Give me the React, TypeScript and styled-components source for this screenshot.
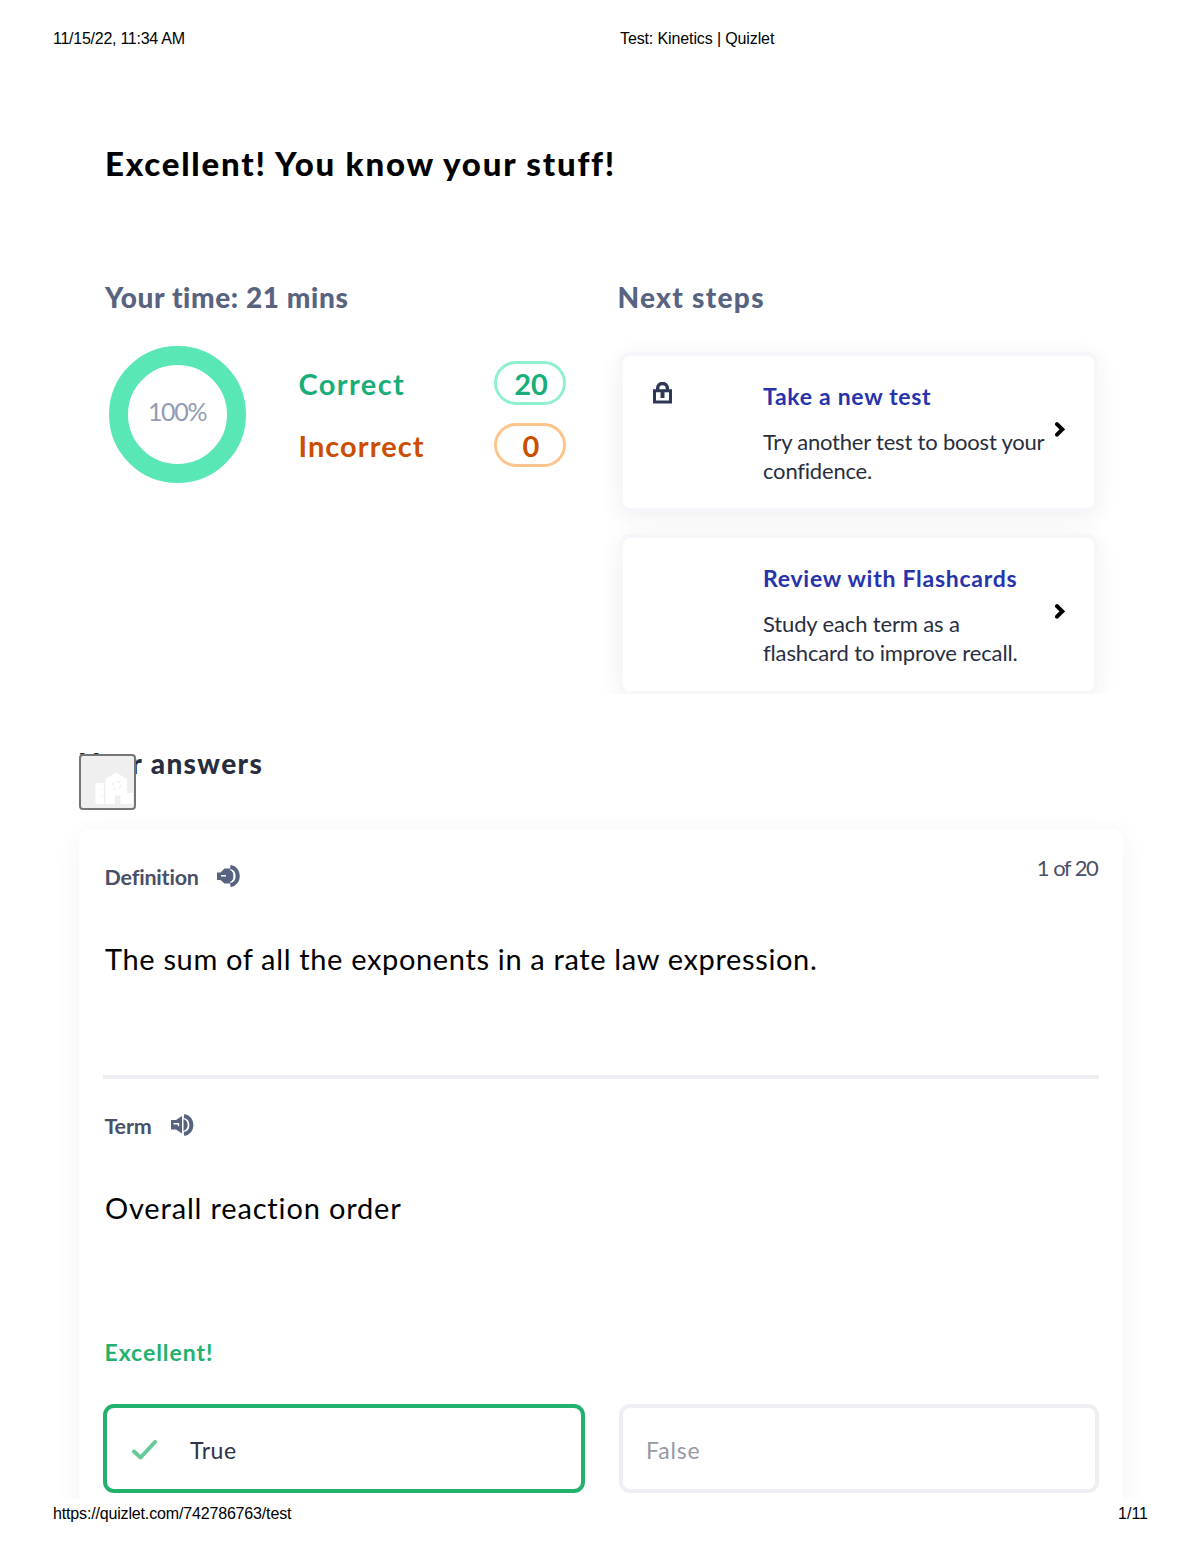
import React from 'react';
import styled, { createGlobalStyle } from 'styled-components';

const GlobalStyle = createGlobalStyle`
  *, *::before, *::after { box-sizing: border-box; }
  body {
    margin: 0;
    background: #fff;
    color: #000;
    font-family: Lato, 'Open Sans', sans-serif;
  }
  h1, h2, h3, p { margin: 0; }
`;

const Page = styled.div`
  width: 1200px;
  height: 1553px;
  display: flex;
  flex-direction: column;
  overflow: hidden;
`;

const PrintLine = styled.div`
  display: grid;
  grid-template-columns: 567px 1fr;
  padding: 0 52px 0 53px;
  font: 16px/18px 'Liberation Sans', Arial, sans-serif;
  white-space: nowrap;
`;

const PrintHeader = styled(PrintLine)`
  padding-top: 30px;
`;

const PrintFooter = styled(PrintLine)`
  padding-top: 6px;
`;

const PrintText = styled.span<{ $spacing?: number; $end?: boolean }>`
  letter-spacing: ${(p) => p.$spacing ?? 0}px;
  text-align: ${(p) => (p.$end ? 'right' : 'left')};
`;

const Title = styled.h1`
  margin-top: 95px;
  padding-left: 105px;
  font-size: 33px;
  font-weight: 900;
  line-height: 40px;
  letter-spacing: 1.78px;
`;

const Summary = styled.section`
  display: grid;
  grid-template-columns: 462px 479px;
  column-gap: 52px;
  height: 414px;
  margin-top: 97px;
  padding-left: 105px;
`;

const SectionHeading = styled.h2<{ $spacing: number }>`
  color: #586380;
  font-size: 28px;
  font-weight: 900;
  line-height: 34px;
  letter-spacing: ${(p) => p.$spacing}px;
  white-space: nowrap;
`;

const NextHeading = styled(SectionHeading)`
  margin-left: -1.5px;
`;

const Score = styled.div`
  display: flex;
  margin-top: 31.5px;
  padding-left: 4px;
`;

const Ring = styled.div`
  display: grid;
  place-items: center;
  width: 137px;
  height: 137px;
  border: 19.4px solid #59e8b5;
  border-radius: 50%;
`;

const Percent = styled.span`
  margin: -7px 0 0 -1px;
  color: #939bb4;
  font-size: 25px;
  line-height: 30px;
  letter-spacing: -1.33px;
`;

const Tally = styled.div`
  flex: 1;
  display: flex;
  flex-direction: column;
  gap: 18px;
  margin: 15.4px 1px 0 52.5px;
`;

const TallyRow = styled.div<{ $color: string }>`
  display: flex;
  align-items: center;
  justify-content: space-between;
  height: 44px;
  color: ${(p) => p.$color};
  font-size: 29px;
  font-weight: 700;
  line-height: 44px;
`;

const TallyLabel = styled.span<{ $spacing: number }>`
  padding-top: 2px;
  letter-spacing: ${(p) => p.$spacing}px;
`;

const Pill = styled.span<{ $border: string }>`
  display: flex;
  align-items: center;
  justify-content: center;
  width: 72px;
  height: 44px;
  padding: 2px 0 0 2px;
  border: 3px solid ${(p) => p.$border};
  border-radius: 22px;
`;

const StepList = styled.div`
  display: flex;
  flex-direction: column;
  gap: 22px;
  height: 380px;
  margin: 0 -30px;
  padding: 37.5px 30px 0;
  overflow: hidden;
`;

const StepCard = styled.article`
  flex: none;
  display: grid;
  grid-template-columns: 110px 292px 1fr;
  height: 160.5px;
  padding: 26px 29px 0 30px;
  border: 4px solid #f6f7fb;
  border-radius: 11px;
  background: #fff;
  box-shadow: 0 5px 22px rgba(40, 46, 62, 0.07);
`;

const StepTitle = styled.h3<{ $spacing: number }>`
  color: #2733ac;
  font-size: 23px;
  font-weight: 700;
  line-height: 28px;
  letter-spacing: ${(p) => p.$spacing}px;
  white-space: nowrap;
`;

const StepText = styled.p<{ $spacing: number }>`
  margin-top: 17px;
  color: #282e3e;
  font-size: 22px;
  line-height: 29px;
  letter-spacing: ${(p) => p.$spacing}px;
  white-space: nowrap;
`;

const StepIcon = styled.div`
  height: 24px;
`;

const StepArrow = styled.div`
  display: flex;
  justify-content: flex-end;
  padding-top: 40px;
`;

const AnswersHeading = styled.h2`
  position: relative;
  height: 34px;
  margin-top: 52px;
  padding-left: 80px;
  color: #282e3e;
  font-size: 28px;
  font-weight: 900;
  line-height: 34px;
  letter-spacing: 1.36px;
`;

const SchoolButton = styled.button`
  position: absolute;
  left: 79px;
  top: 8px;
  width: 57px;
  height: 56px;
  padding: 0;
  border: 2.5px solid #757575;
  border-radius: 4px;
  background: #efefef;
  overflow: hidden;
`;

const AnswerViewport = styled.div`
  display: flex;
  height: 719px;
  padding: 48.5px 77px 0 79px;
  overflow: hidden;
`;

const AnswerCard = styled.section`
  width: 1044px;
  height: 760px;
  padding: 27px 24px 0;
  border-radius: 11px;
  background: #fff;
  box-shadow: 0 5px 26px rgba(40, 46, 62, 0.06);
`;

const SideHeader = styled.div`
  display: flex;
  height: 40px;
  padding-left: 1.5px;
`;

const SideLabel = styled.span`
  padding-top: 8.5px;
  color: #4a5068;
  font-size: 21.5px;
  font-weight: 700;
  line-height: 26px;
  letter-spacing: -0.2px;
`;

const AudioButton = styled.span`
  margin: 9.5px 0 0 18px;
`;

const Counter = styled.span`
  margin: -1px 0 0 auto;
  padding-right: 2px;
  color: #4a5068;
  font-size: 22px;
  line-height: 26px;
  letter-spacing: -1.7px;
  word-spacing: 1.5px;
`;

const SideText = styled.p<{ $spacing: number }>`
  margin-top: 45.5px;
  padding-left: 2px;
  font-size: 29px;
  line-height: 36px;
  letter-spacing: ${(p) => p.$spacing}px;
`;

const Divider = styled.hr`
  height: 4px;
  margin: 97.5px 0 26px;
  border: 0;
  background: #edeff4;
`;

const Verdict = styled.p`
  margin-top: 112px;
  padding-left: 1.5px;
  color: #23b26d;
  font-size: 23px;
  font-weight: 700;
  line-height: 28px;
  letter-spacing: 0.95px;
`;

const Options = styled.div`
  display: grid;
  grid-template-columns: 481.5px 480px;
  column-gap: 34px;
  margin-top: 38px;
`;

const Option = styled.div<{ $chosen?: boolean }>`
  display: flex;
  align-items: center;
  gap: 33px;
  height: 89px;
  padding: 2px 25px 0;
  border: 4px solid ${(p) => (p.$chosen ? '#23b26d' : '#edeff4')};
  border-radius: 11px;
  color: ${(p) => (p.$chosen ? '#2e3348' : '#9799a3')};
  font-size: 23px;
  line-height: 28px;
  letter-spacing: ${(p) => (p.$chosen ? 0.58 : 0.8)}px;
`;

const FalseOption = styled(Option)`
  padding-left: 23.5px;
`;

const Glyph = styled.svg`
  display: block;
`;

const Lock = () => (
  <Glyph width="19" height="22" viewBox="0 0 19 22">
    <path d="M4.7 8V5.8a4.8 4.3 0 0 1 9.6 0V8" fill="none" stroke="#2e3856" strokeWidth="3.4" />
    <path d="M1.5 8.7h16v11.3h-16z" fill="#fff" stroke="#2e3856" strokeWidth="3" />
    <path d="M7.5 9h4v7H7.5z" fill="#2e3856" />
  </Glyph>
);

const Chevron = () => (
  <Glyph width="10" height="15" viewBox="0 0 10 15">
    <path d="M2 2.2l5.2 5.2L2 12.6" fill="none" stroke="#000" strokeWidth="4" strokeLinecap="round" />
  </Glyph>
);

const Check = () => (
  <Glyph width="25" height="20" viewBox="0 0 25 20">
    <path d="M2 11.5l6.6 6L23 2" fill="none" stroke="#65c998" strokeWidth="4" strokeLinecap="round" strokeLinejoin="round" />
  </Glyph>
);

const Speaker = ({ solid }: { solid?: boolean }) => (
  <Glyph width="24" height="22" viewBox="0 0 24 22">
    {solid ? (
      <>
        <path d="M0 7.5h3.5l4-4h5l4 4v7l-4 4h-5L3.5 15H0z" fill="#586380" />
        <path d="M13.3 2c9.9 1.5 9.9 16.5 0 18" fill="none" stroke="#586380" strokeWidth="4.2" />
        <path d="M13 4.5c5.5 2.500 5.500 10.500 0 13" fill="none" stroke="#fff" strokeWidth="1" />
        <path d="M4 10.800h5" stroke="#fff" strokeWidth="1.5" />
      </>
    ) : (
      <>
        <path d="M1 6h5l6-4v17.500l-6-4H1z" fill="#586380" />
        <path d="M3.500 9.700h5v2.500" fill="none" stroke="#fff" strokeWidth="1.400" />
        <path d="M13.500 5c5.500 1.500 5.500 10.500 0 12z" fill="#586380" />
        <path d="M14 2c9.900 1.500 9.900 16.500 0 18" fill="none" stroke="#586380" strokeWidth="4" />
      </>
    )}
  </Glyph>
);

const School = () => (
  <Glyph width="52" height="52" viewBox="0 0 52 52">
    <path d="M14.500 27h8.500v21h-8.500zM24.500 48V23L35 16.500 46 23v14h6v11H39.500v-8.500h-5.500V48z" fill="#fff" />
    <circle cx="35.500" cy="29.500" r="4" fill="none" stroke="#efefef" strokeWidth="1.300" strokeDasharray="4 2" />
    <path d="M20 33h1.500M20 40h1.500" stroke="#efefef" strokeWidth="1.500" />
  </Glyph>
);

export default function App() {
  return (
    <Page>
      <GlobalStyle />
      <PrintHeader>
        <PrintText $spacing={-0.26}>11/15/22, 11:34 AM</PrintText>
        <PrintText $spacing={-0.12}>Test: Kinetics | Quizlet</PrintText>
      </PrintHeader>

      <Title>Excellent! You know your stuff!</Title>

      <Summary>
        <div>
          <SectionHeading $spacing={0.6}>Your time: 21 mins</SectionHeading>
          <Score>
            <Ring>
              <Percent>100%</Percent>
            </Ring>
            <Tally>
              <TallyRow $color="#18ae79">
                <TallyLabel $spacing={1.4}>Correct</TallyLabel>
                <Pill $border="#8ff0cd">20</Pill>
              </TallyRow>
              <TallyRow $color="#cc4e00">
                <TallyLabel $spacing={1.05}>Incorrect</TallyLabel>
                <Pill $border="#ffc38c">0</Pill>
              </TallyRow>
            </Tally>
          </Score>
        </div>
        <div>
          <NextHeading $spacing={1.3}>Next steps</NextHeading>
          <StepList>
            <StepCard>
              <StepIcon>
                <Lock />
              </StepIcon>
              <div>
                <StepTitle $spacing={0.7}>Take a new test</StepTitle>
                <StepText $spacing={-0.2}>
                  Try another test to boost your
                  <br />
                  confidence.
                </StepText>
              </div>
              <StepArrow>
                <Chevron />
              </StepArrow>
            </StepCard>
            <StepCard>
              <StepIcon />
              <div>
                <StepTitle $spacing={0.74}>Review with Flashcards</StepTitle>
                <StepText $spacing={-0.14}>
                  Study each term as a
                  <br />
                  flashcard to improve recall.
                </StepText>
              </div>
              <StepArrow>
                <Chevron />
              </StepArrow>
            </StepCard>
          </StepList>
        </div>
      </Summary>

      <AnswersHeading>
        Your answers
        <SchoolButton aria-label="School">
          <School />
        </SchoolButton>
      </AnswersHeading>

      <AnswerViewport>
        <AnswerCard>
          <SideHeader>
            <SideLabel>Definition</SideLabel>
            <AudioButton>
              <Speaker solid />
            </AudioButton>
            <Counter>1 of 20</Counter>
          </SideHeader>
          <SideText $spacing={0.65}>The sum of all the exponents in a rate law expression.</SideText>
          <Divider />
          <SideHeader>
            <SideLabel>Term</SideLabel>
            <AudioButton>
              <Speaker />
            </AudioButton>
          </SideHeader>
          <SideText $spacing={0.83}>Overall reaction order</SideText>
          <Verdict>Excellent!</Verdict>
          <Options>
            <Option $chosen>
              <Check />
              True
            </Option>
            <FalseOption>False</FalseOption>
          </Options>
        </AnswerCard>
      </AnswerViewport>

      <PrintFooter>
        <PrintText $spacing={-0.16}>https://quizlet.com/742786763/test</PrintText>
        <PrintText $end>1/11</PrintText>
      </PrintFooter>
    </Page>
  );
}
